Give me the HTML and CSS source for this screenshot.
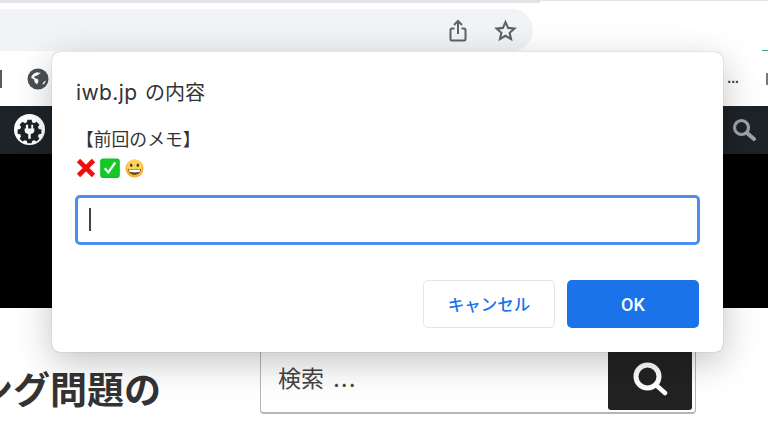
FILE: index.html
```html
<!DOCTYPE html>
<html lang="ja">
<head>
<meta charset="utf-8">
<title>iwb.jp</title>
<link rel="stylesheet" href="styles.css">
</head>
<body>
<div class="page">
  <div class="tabstrip"><div class="tabline"></div><div class="tabrest"></div></div>
  <div class="toolbar">
    <div class="omnibox">
      <svg class="ico-share" viewBox="0 0 18 24" width="18" height="24"><path d="M5.500 9.500H3a1.500 1.500 0 0 0-1.500 1.500v9A1.500 1.500 0 0 0 3 21.500h12a1.500 1.500 0 0 0 1.500-1.500v-9A1.500 1.500 0 0 0 15 9.500h-2.500M9 15V2M5 6l4-4 4 4" fill="none" stroke="#5f6368" stroke-width="2"/></svg>
      <svg class="ico-star" viewBox="0 0 24 24" width="23" height="23"><path d="M12 3.200l2.700 6.100 6.600.7-5 4.400 1.500 6.500-5.800-3.400-5.800 3.400 1.500-6.500-5-4.400 6.600-.7z" fill="none" stroke="#5f6368" stroke-width="2.200" stroke-linejoin="miter"/></svg>
    </div>
    <div class="teal"></div>
  </div>
  <div class="bookmarks">
    <span class="bm-edge"></span>
    <svg class="ico-globe" viewBox="0 0 22 22" width="22" height="22"><circle cx="11" cy="11" r="10.500" fill="#4c4f53"/><path d="M10 4.200c1.500.6 3 .2 3.800.8-.8 1-2 1-2.800 1.900-.9 1-2.700.7-3.600 1.700-.7 1 .5 2 1.700 2 1.600 0 2.400 1.100 2.300 2.500 0 1.300-.9 2.200-1.200 3.100-1.900-.6-2.900-2.500-3-4-.1-1.400-2.200-1.600-3.200-2.600.9-2.900 3.300-4.700 6-5.400zM19 12.500c-.4 1.800-1.500 3.400-3.300 4.300-.3-1.200.3-2 1-2.700.7-.7 1.300-1.200 2.300-1.600z" fill="#fff"/></svg>
    <span class="bm-more">...</span>
    <span class="bm-next"></span>
  </div>
  <div class="adminbar">
    <svg class="ico-gear" viewBox="0 0 30 30" width="31" height="31"><circle cx="15" cy="15" r="15" fill="#fff"/><path d="M13 5.500h4l.6 2.600 1.900.8 2.300-1.400 2.800 2.800-1.400 2.300.8 1.900 2.500.6v4l-2.500.6-.8 1.900 1.400 2.300-2.800 2.800-2.300-1.400-1.900.8-.6 2.300h-4l-.6-2.300-1.900-.8-2.300 1.400-2.800-2.800 1.400-2.300-.8-1.900-2.500-.6v-4l2.500-.6.800-1.900-1.400-2.300 2.800-2.800 2.300 1.400 1.900-.8z" fill="#1d2327"/><path d="M11.500 10.500v3.500h-1.200v2c0 2 1.400 3 3.500 3.400V24h2.400v-4.600c2.100-.4 3.500-1.400 3.500-3.400v-2h-1.200v-3.500h-1.800V14h-3V10.500z" fill="#fff"/></svg>
    <svg class="ico-adminsearch" viewBox="0 0 24 24" width="24" height="24"><circle cx="9.500" cy="9.500" r="7" fill="none" stroke="#9ea3a8" stroke-width="3.200"/><path d="M15 15l7 6" stroke="#9ea3a8" stroke-width="4" stroke-linecap="round"/></svg>
  </div>
  <div class="hero"></div>
  <div class="content">
    <h1 class="headline"><span>ング問題の</span></h1>
    <form class="searchform">
      <span class="searchtext">検索 <span class="dots">...</span></span>
      <span class="searchbtn">
        <svg viewBox="0 0 36 36" width="36" height="36"><circle cx="15.500" cy="15.500" r="11.500" fill="none" stroke="#fff" stroke-width="5"/><path d="M24 24l9 8" stroke="#fff" stroke-width="4.500" stroke-linecap="round"/></svg>
      </span>
    </form>
  </div>

  <div class="dialog">
    <div class="title"><span class="latin">iwb.jp</span> の内容</div>
    <div class="message">
      <p class="memo">【前回のメモ】</p>
      <p class="emoji">
        <svg viewBox="0 0 20 20" width="20" height="20"><path d="M2.500 2.500l15 15M17.500 2.500l-15 15" stroke="#f00d0d" stroke-width="4.600"/></svg>
        <svg viewBox="0 0 20 20" width="20" height="20"><rect x="0.200" y="0.500" width="19.600" height="19.500" rx="3" fill="#0fbf1f"/><rect x="1.500" y="1.500" width="17" height="17" rx="2" fill="#14c925"/><path d="M4.800 10.200l3.500 4.300 7-10" fill="none" stroke="#fff" stroke-width="2.200"/></svg>
        <svg class="grin" viewBox="0 0 20 20" width="19" height="19"><circle cx="10" cy="10" r="9.500" fill="#f7b13c"/><circle cx="10" cy="8.500" r="8" fill="#fcd45e"/><ellipse cx="6.500" cy="6.500" rx="1.300" ry="1.800" fill="#5b3a12"/><ellipse cx="13.500" cy="6.500" rx="1.300" ry="1.800" fill="#5b3a12"/><path d="M3 10.200c4 1 10 1 14 0-.4 4-3.500 6.300-7 6.300s-6.600-2.300-7-6.300z" fill="#5b3a12"/><path d="M3.800 10.800c4 .8 8.400.8 12.400 0-.2 1.300-.6 2.300-1.200 3-3 .7-7 .7-10 0-.6-.7-1-1.700-1.200-3z" fill="#fff"/></svg>
      </p>
    </div>
    <div class="field"><span class="caret"></span></div>
    <div class="actions">
      <span class="btn btn-cancel">キャンセル</span>
      <span class="btn btn-ok">OK</span>
    </div>
  </div>
</div>
</body>
</html>
```
FILE: styles.css
```css
* { box-sizing: border-box; }
html, body { margin: 0; padding: 0; background: #fff; }
.page {
  position: relative;
  width: 768px;
  height: 424px;
  overflow: hidden;
  display: flex;
  flex-direction: column;
  font-family: "Noto Sans CJK JP", "Noto Sans", sans-serif;
  background: #fff;
}
.tabstrip { height: 3px; display: flex; flex: none; }
.tabline { width: 540px; background: #e1e3e6; }
.tabrest { flex: 1; height: 1px; background: #e4e4e4; }
.toolbar { height: 48px; flex: none; padding-top: 6px; position: relative; }
.omnibox {
  width: 533px;
  height: 42px;
  background: #f1f3f4;
  border-radius: 0 21px 21px 0;
  display: flex;
  align-items: center;
  justify-content: flex-end;
  padding-right: 16px;
  gap: 27px;
}
.ico-share { flex: none; margin-top: 1px; }
.teal { position: absolute; right: 0; bottom: 0; width: 6px; height: 1px; background: #3aa6a0; }
.bookmarks {
  height: 55px;
  flex: none;
  display: flex;
  align-items: center;
  position: relative;
}
.bm-edge { width: 2px; height: 18px; background: #5a5a5a; margin-right: 25px; flex: none; }
.ico-globe { flex: none; }
.bm-more { margin-left: auto; margin-right: 27px; font: 700 14px/1 "Liberation Sans", sans-serif; color: #444; margin-top: -1px; }
.bm-next { width: 2px; height: 12px; background: #777; }
.adminbar {
  height: 48px;
  flex: none;
  background: #1d2327;
  display: flex;
  align-items: center;
  justify-content: space-between;
  padding: 0 12px 0 14px;
}
.ico-gear { flex: none; margin-top: -1px; }
.ico-adminsearch { flex: none; margin-top: -1px; }
.hero { height: 154px; flex: none; background: #000; }
.content { flex: 1; display: flex; align-items: flex-start; position: relative; }
.headline {
  width: 260px;
  margin: 0;
  display: flex;
  padding: 56px 99px 0 0;
  justify-content: flex-end;
  flex: none;
  font-size: 37px;
  line-height: 48px;
  font-weight: 700;
  color: #333;
  white-space: nowrap;
}
.headline span { flex: none; }
.searchform {
  width: 436px;
  height: 107px;
  margin-top: -1px;
  border: 1px solid #b5b5b5;
  border-bottom-width: 2px;
  border-radius: 4px;
  display: flex;
  justify-content: space-between;
  align-items: flex-end;
  padding: 0 3px 2px 17px;
}
.searchtext { font-size: 23px; line-height: 60px; color: #444; height: 60px; margin-bottom: 3px; white-space: nowrap; }
.dots { letter-spacing: 1.500px; margin-left: 4px; }
.searchbtn {
  width: 84px;
  height: 60px;
  background: #222;
  border-radius: 3px;
  display: flex;
  align-items: center;
  justify-content: center;
  padding-bottom: 2px;
}
.dialog {
  position: absolute;
  left: 52px;
  top: 52px;
  width: 671px;
  height: 300px;
  background: #fff;
  border-radius: 8px;
  box-shadow: 0 0 1px rgba(0,0,0,.45), 0 10px 36px rgba(0,0,0,.24);
  padding: 24px;
  display: flex;
  flex-direction: column;
  color: #202124;
}
.title { font-size: 20px; line-height: 32px; color: #333; }
.latin { font-family: Inter, "Noto Sans", sans-serif; font-size: 21px; letter-spacing: .4px; margin-right: 3px; }
.message { margin-top: 14px; }
.memo { margin: 0; font-size: 17.800px; line-height: 30px; color: #333; }
.emoji { margin: 0; height: 30px; display: flex; align-items: center; gap: 4px; }
.grin { margin-left: 1px; }
.field {
  margin: 12px -1px 0;
  height: 51px;
  border: 3px solid #4d8ef2;
  border-radius: 5px;
  padding: 10px 0 0 11px;
}
.caret { display: block; width: 2px; height: 23px; background: #444; }
.actions { margin-top: 35px; display: flex; justify-content: flex-end; gap: 12px; }
.btn {
  width: 132px;
  height: 48px;
  border-radius: 5px;
  display: flex;
  align-items: center;
  justify-content: center;
  font-size: 16.500px;
  font-weight: 500;
}
.btn-cancel { color: #1a73e8; border: 1px solid #e3e5e8; }
.btn-ok { color: #fff; background: #1a73e8; font-family: Roboto, "Noto Sans", sans-serif; font-size: 18px; }
```
